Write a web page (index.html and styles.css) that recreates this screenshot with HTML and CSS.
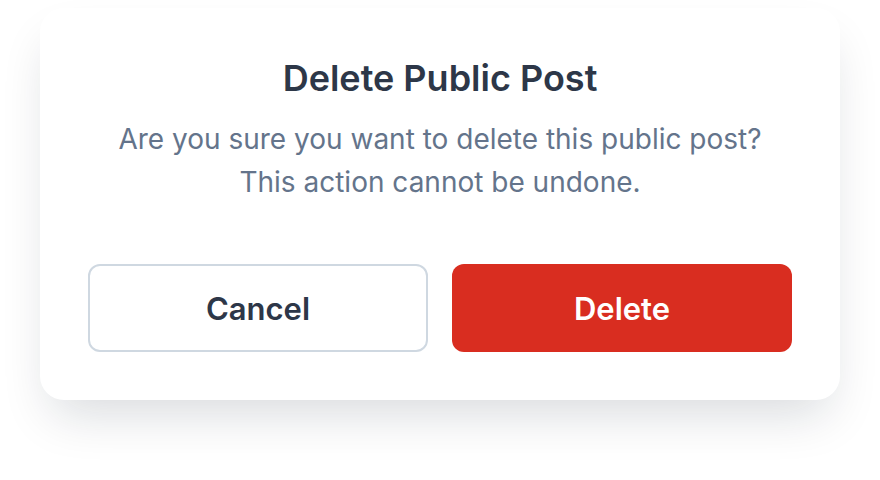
FILE: index.html
```html
<!DOCTYPE HTML>
<html>
<head>
    <meta charset='utf-8'>
    <link rel="stylesheet" href="styles.css">
</head>
<body>
    <div class="page">
        <div class="dialog">
            <h2 class="dialogTitle">Delete Public Post</h2>
            <p class="dialogText">Are you sure you want to delete this public post?<br>This action cannot be undone.</p>
            <div class="dialogActions">
                <button class="btn btnCancel">Cancel</button>
                <button class="btn btnDelete">Delete</button>
            </div>
        </div>
    </div>
</body>
</html>
```

FILE: styles.css
```css
body {
    margin: 0;
    background-color: white;
    font-family: Inter, "Noto Sans", sans-serif;
}

.page {
    min-height: 480px;
    box-sizing: border-box;
    padding: 8px 40px;
}

.dialog {
    width: 800px;
    box-sizing: border-box;
    padding: 48px;
    background-color: white;
    border-radius: 24px;
    box-shadow: 0 25px 50px -12px rgba(15, 23, 42, 0.16);
    text-align: center;
}

.dialogTitle {
    margin: 0;
    font-size: 36px;
    line-height: 44px;
    font-weight: 600;
    color: #2d3748;
}

.dialogText {
    margin: 18px 0 0 0;
    font-size: 28px;
    line-height: 43px;
    color: #64748b;
}

.dialogActions {
    display: grid;
    grid-template-columns: 1fr 1fr;
    gap: 24px;
    margin-top: 60px;
}

.btn {
    height: 88px;
    border-radius: 12px;
    font-family: inherit;
    font-size: 31px;
    font-weight: 600;
}

.btnCancel {
    background-color: white;
    border: 2px solid #cfd8e1;
    color: #2d3748;
}

.btnDelete {
    background-color: #d92d20;
    border: none;
    color: white;
}
```
